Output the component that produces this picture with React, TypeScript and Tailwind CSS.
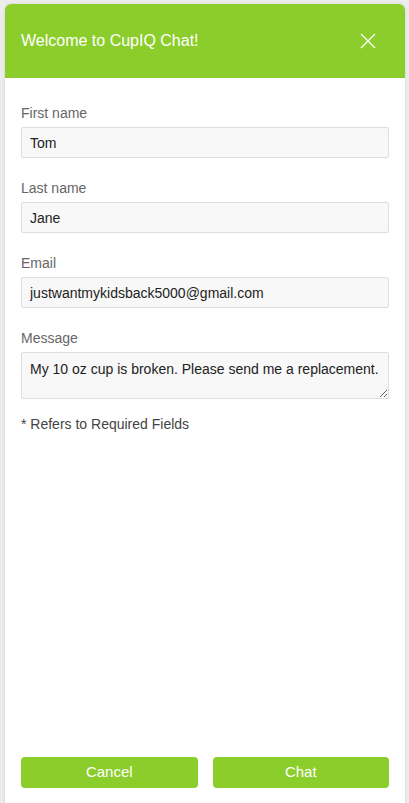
import React from "react";

const font = { fontFamily: '"Liberation Sans", Arial, sans-serif' };

const Field = ({ label, value }: { label: string; value: string }) => (
  <div className="mb-[22px]">
    <label className="block text-[14px] leading-4 text-[#666]">{label}</label>
    <input
      className="mt-[6px] block h-[31px] w-full rounded-[2px] border border-[#dedede] bg-[#f8f8f8] px-2 text-[14px] text-[#222] outline-none"
      defaultValue={value}
    />
  </div>
);

export default function App() {
  return (
    <div className="flex h-screen bg-[#ececec] pt-1 pl-[5px] pr-1" style={font}>
      <div className="flex w-[400px] flex-col overflow-hidden rounded-t-md bg-white shadow-[0_0_3px_rgba(0,0,0,0.12)]">
        <div className="flex h-[74px] shrink-0 items-center justify-between bg-[#8bcd2b] pl-4 pr-[29px]">
          <h1 className="text-[16px] text-white">Welcome to CupIQ Chat!</h1>
          <button className="text-white">
            <svg width="16" height="16" viewBox="0 0 16 16" fill="none" stroke="currentColor" strokeWidth="1.3">
              <path d="M1 1l14 14M15 1L1 15" />
            </svg>
          </button>
        </div>

        <div className="flex flex-1 flex-col px-4 pt-[27px] pb-[15px]">
          <Field label="First name" value="Tom" />
          <Field label="Last name" value="Jane" />
          <Field label="Email" value="justwantmykidsback5000@gmail.com" />
          <div>
            <label className="block text-[14px] leading-4 text-[#666]">Message</label>
            <textarea
              className="mt-[6px] block h-[47px] w-full rounded-[2px] border border-[#dedede] bg-[#f8f8f8] px-2 py-[7px] text-[14px] leading-[18px] text-[#222] outline-none"
              defaultValue="My 10 oz cup is broken. Please send me a replacement."
            />
          </div>
          <p className="mt-[17px] text-[14px] leading-4 text-[#444]">* Refers to Required Fields</p>

          <div className="mt-auto grid grid-cols-2 gap-[15px]">
            <button className="h-[31px] rounded-[4px] bg-[#8bcd2b] text-[15px] text-white">Cancel</button>
            <button className="h-[31px] rounded-[4px] bg-[#8bcd2b] text-[15px] text-white">Chat</button>
          </div>
        </div>
      </div>
    </div>
  );
}
